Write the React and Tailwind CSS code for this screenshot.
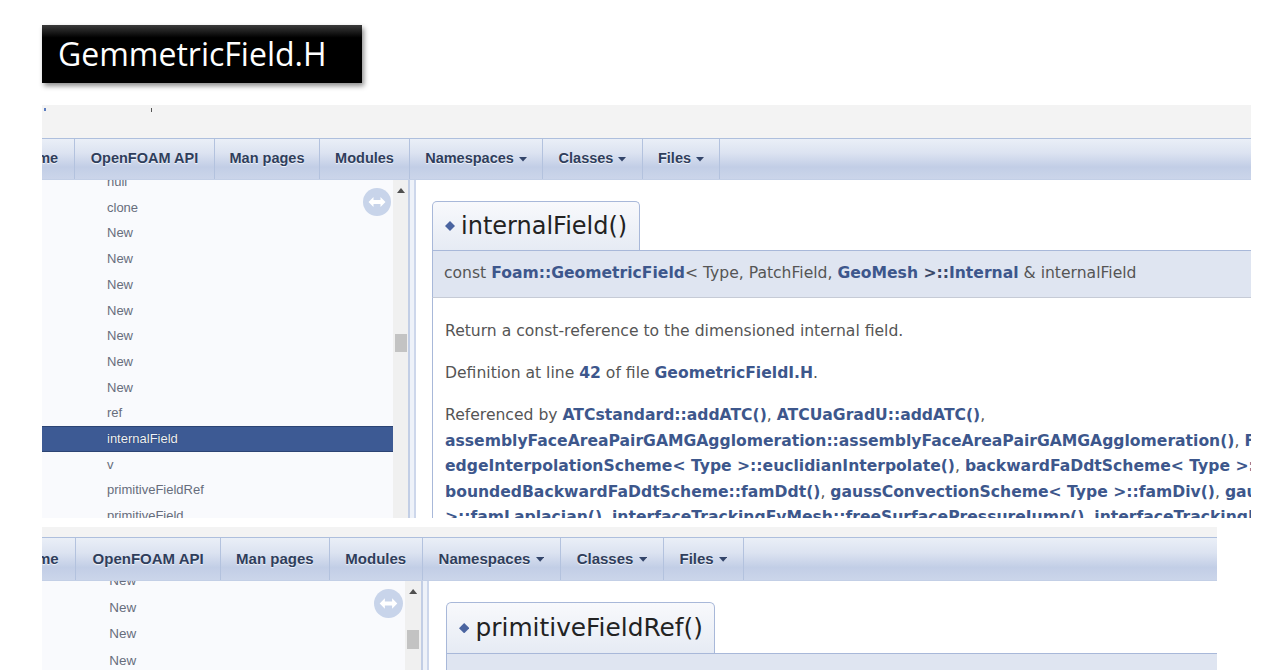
import React from 'react';

const NAV = [
  { label: 'Home', cls: 'w-[73px]' },
  { label: 'OpenFOAM API', cls: 'w-[140px]' },
  { label: 'Man pages', cls: 'w-[105px]' },
  { label: 'Modules', cls: 'w-[90px]' },
  { label: 'Namespaces', cls: 'w-[133px]', caret: true },
  { label: 'Classes', cls: 'w-[100px]', caret: true },
  { label: 'Files', cls: 'w-[77px]', caret: true },
];

const SANS = "font-['Liberation_Sans',Arial,sans-serif]";
const DOC = "font-['DejaVu_Sans',Verdana,sans-serif]";

function Caret() {
  return (
    <svg width="8" height="5" viewBox="0 0 8 5" className="ml-[5px] mt-[1px]">
      <path d="M0 0 H8 L4 4.5 Z" fill="#33456a" />
    </svg>
  );
}

function NavBar() {
  return (
    <div className="h-[42px] shrink-0 flex border-t border-[#aebfdd] border-b border-b-[#c3cfe6] bg-[linear-gradient(to_bottom,#eaeff7_0%,#dce3f1_35%,#c2cee6_70%,#cbd5ea_100%)] overflow-hidden">
      <div className="flex -ml-[40px]">
        {NAV.map((n) => (
          <div
            key={n.label}
            className={`${n.cls} shrink-0 flex items-center justify-center border-r border-[#b3c2de] ${SANS} font-bold text-[14.5px] text-[#2f3e5c] [text-shadow:0_1px_1px_rgba(255,255,255,0.8)]`}
          >
            <span>{n.label}</span>
            {n.caret && <Caret />}
          </div>
        ))}
      </div>
    </div>
  );
}

function SyncIcon() {
  return (
    <svg width="28" height="28" viewBox="0 0 28 28">
      <circle cx="14" cy="14" r="14" fill="#c8d4ea" />
      <path d="M5.5 14 L10.5 9 L10.5 12 L17.5 12 L17.5 9 L22.5 14 L17.5 19 L17.5 16 L10.5 16 L10.5 19 Z" fill="#ffffff" />
    </svg>
  );
}

function Sidebar({ items, active, offset, thumb }) {
  return (
    <>
      <div className="relative w-[351px] shrink-0 bg-[#f9fafd] overflow-hidden">
        <div className={offset}>
          {items.map((it, i) => (
            <div
              key={i}
              className={`h-[25.7px] flex items-center pl-[65px] ${SANS} text-[13px] ${
                i === active
                  ? 'bg-[#3d5a94] text-[#eef2fa] border-y border-[#2c4474] [text-shadow:0_0_1px_rgba(0,0,0,0.6)]'
                  : 'text-[#676d7c]'
              }`}
            >
              {it}
            </div>
          ))}
        </div>
        <div className="absolute right-[2px] top-[8px]">
          <SyncIcon />
        </div>
      </div>
      <div className="w-[15px] shrink-0 bg-[#f0f0f0] flex flex-col items-center">
        <svg width="8" height="5" viewBox="0 0 8 5" className="mt-[8px]">
          <path d="M0 5 H8 L4 0 Z" fill="#505050" />
        </svg>
        <div className={`w-[12px] h-[18px] bg-[#c3c3c3] ${thumb}`} />
      </div>
      <div className="w-[8px] shrink-0 bg-[#eef2f9] border-l-2 border-[#c2cee5] border-r-2 border-r-[#cdd7eb]" />
    </>
  );
}

function Diamond() {
  return (
    <svg width="10" height="10" viewBox="0 0 10 10" className="mr-[6px]">
      <path d="M5 0 L10 5 L5 10 L0 5 Z" fill="#4a64a0" />
    </svg>
  );
}

function L({ children }) {
  return <span className="font-bold text-[#3d578c]">{children}</span>;
}

function MemHead({ title, tabW }) {
  return (
    <div
      className={`${tabW} h-[49px] flex items-center pl-[12px] border border-b-0 border-[#a8b8d9] rounded-t-[5px] bg-[linear-gradient(to_bottom,#f8f9fc,#e6ebf4)]`}
    >
      <Diamond />
      <span className={`${DOC} text-[24px] text-[#222] leading-none`}>{title}</span>
    </div>
  );
}

function ShotOne() {
  const items = ['null', 'clone', 'New', 'New', 'New', 'New', 'New', 'New', 'New', 'ref', 'internalField', 'v', 'primitiveFieldRef', 'primitiveField', 'primitiveField'];
  return (
    <div className="w-[1209px] h-[413px] overflow-hidden bg-white flex flex-col shrink-0">
      <div className="relative h-[33px] shrink-0 bg-[#f3f3f3]">
        <div className="absolute left-[2px] top-[3px] w-[2px] h-[3px] bg-[#5b7cc0]" />
        <div className="absolute left-[109px] top-[3px] w-[1px] h-[4px] bg-[#555]" />
      </div>
      <NavBar />
      <div className="flex flex-1 min-h-0">
        <Sidebar items={items} active={10} offset="-mt-[11px]" thumb="mt-[141px]" />
        <div className="flex-1 min-w-0 overflow-hidden bg-white pl-[16px] pt-[21px]">
          <div className="w-[1000px]">
            <MemHead title="internalField()" tabW="w-[208px]" />
            <div className={`h-[48px] flex items-center pl-[11px] bg-[#dfe5f1] border border-[#a8b8d9] border-b-[#c6cbd6] ${DOC} text-[15.6px] text-[#555] whitespace-nowrap`}>
              <span>
                const <L>Foam::GeometricField</L>&lt; Type, PatchField, <L>GeoMesh</L>
                <span className="font-bold text-[#3a4a68]"> &gt;::</span>
                <L>Internal</L> &amp; internalField
              </span>
            </div>
            <div className={`border-l border-[#a8b8d9] pl-[12px] pt-[21px] ${DOC} text-[15.6px] text-[#555] leading-[25.5px] whitespace-nowrap`}>
              <p>Return a const-reference to the dimensioned internal field.</p>
              <p className="mt-[16.5px]">
                Definition at line <L>42</L> of file <L>GeometricFieldI.H</L>.
              </p>
              <p className="mt-[16.5px]">
                Referenced by <L>ATCstandard::addATC()</L>, <L>ATCUaGradU::addATC()</L>,
                <br />
                <L>assemblyFaceAreaPairGAMGAgglomeration::assemblyFaceAreaPairGAMGAgglomeration()</L>, <L>Foam::fac::average()</L>,
                <br />
                <L>edgeInterpolationScheme&lt; Type &gt;::euclidianInterpolate()</L>, <L>backwardFaDdtScheme&lt; Type &gt;::famDdt()</L>,
                <br />
                <L>boundedBackwardFaDdtScheme::famDdt()</L>, <L>gaussConvectionScheme&lt; Type &gt;::famDiv()</L>, <L>gaussLaplacianScheme</L>
                <br />
                <L>&gt;::famLaplacian()</L>, <L>interfaceTrackingFvMesh::freeSurfacePressureJump()</L>, <L>interfaceTrackingFvMesh</L>
              </p>
            </div>
          </div>
        </div>
      </div>
    </div>
  );
}

function ShotTwo() {
  const items = ['New', 'New', 'New', 'New', 'New', 'New'];
  return (
    <div className="w-[1135px] h-[200px] overflow-hidden bg-white flex flex-col shrink-0 [zoom:1.035]">
      <div className="h-[9.7px] shrink-0 bg-[#f3f3f3]" />
      <NavBar />
      <div className="flex flex-1 min-h-0">
        <Sidebar items={items} active={-1} offset="-mt-[12px]" thumb="mt-[35px]" />
        <div className="flex-1 min-w-0 overflow-hidden bg-white pl-[16px] pt-[21px]">
          <div className="w-[1000px]">
            <MemHead title="primitiveFieldRef()" tabW="w-[260px]" />
            <div className="h-[48px] bg-[#dfe5f1] border border-[#a8b8d9]" />
          </div>
        </div>
      </div>
    </div>
  );
}

export default function App() {
  return (
    <div className="w-[1280px] h-[670px] overflow-hidden bg-white pl-[42px] pt-[25px] flex flex-col">
      <div className="w-[320px] h-[58px] shrink-0 flex items-center pl-[16px] bg-[linear-gradient(to_bottom,#3a3a3a_0%,#000_22%,#000_100%)] shadow-[2px_3px_5px_rgba(0,0,0,0.45)]">
        <span className="font-['Open_Sans','Noto_Sans',sans-serif] text-[32px] text-white leading-none">GemmetricField.H</span>
      </div>
      <div className="h-[22px] shrink-0" />
      <ShotOne />
      <div className="h-[9px] shrink-0" />
      <ShotTwo />
    </div>
  );
}
